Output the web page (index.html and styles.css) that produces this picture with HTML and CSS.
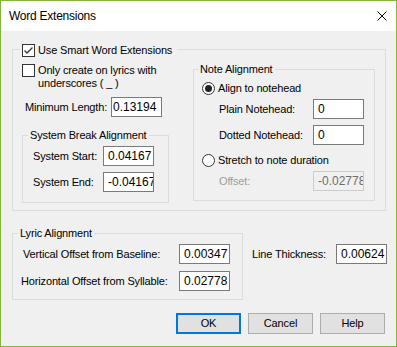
FILE: index.html
```html
<!DOCTYPE html>
<html>
<head>
<meta charset="utf-8">
<link rel="stylesheet" href="styles.css">
</head>
<body>
<div class="window">
  <div class="titlebar">
    <span class="title">Word Extensions</span>
    <svg class="close" viewBox="0 0 10 10" width="10" height="10"><path d="M0.5 0.5 L9.5 9.5 M9.5 0.5 L0.5 9.5" stroke="#000" stroke-width="1" fill="none"/></svg>
  </div>
  <div class="content">
    <div class="group outer">
      <div class="legend legend-outer">
        <span class="cb"><svg viewBox="0 0 11 11" width="11" height="11"><path d="M1.5 5.5 L4 8 L9.5 2.5" stroke="#333" stroke-width="1.3" fill="none"/></svg></span>
        <span class="cb-text">Use Smart Word Extensions</span>
      </div>
      <div class="outer-cols">
        <div class="left-col">
          <div class="opt-row">
            <span class="cb"></span>
            <span class="wrap-text">Only create on lyrics with<br>underscores ( _ )</span>
          </div>
          <div class="row min-row">
            <span class="lbl lbl-min">Minimum Length:</span>
            <span class="edit edit-min">0.13194</span>
          </div>
          <div class="group sba">
            <span class="legend legend-sba">System Break Alignment</span>
            <div class="row sba-row first">
              <span class="lbl lbl-sba">System Start:</span>
              <span class="edit">0.04167</span>
            </div>
            <div class="row sba-row second">
              <span class="lbl lbl-sba">System End:</span>
              <span class="edit">-0.04167</span>
            </div>
          </div>
        </div>
        <div class="group note">
          <span class="legend legend-note">Note Alignment</span>
          <div class="radio-row r1">
            <span class="rb on"></span>
            <span>Align to notehead</span>
          </div>
          <div class="row note-row plain">
            <span class="lbl lbl-note">Plain Notehead:</span>
            <span class="edit">0</span>
          </div>
          <div class="row note-row dotted">
            <span class="lbl lbl-note">Dotted Notehead:</span>
            <span class="edit">0</span>
          </div>
          <div class="radio-row r2">
            <span class="rb"></span>
            <span>Stretch to note duration</span>
          </div>
          <div class="row note-row offset">
            <span class="lbl lbl-note disabled">Offset:</span>
            <span class="edit edit-disabled">-0.02778</span>
          </div>
        </div>
      </div>
    </div>
    <div class="lower">
      <div class="group lyric">
        <span class="legend legend-lyric">Lyric Alignment</span>
        <div class="row ly-row v">
          <span class="lbl lbl-v">Vertical Offset from Baseline:</span>
          <span class="edit">0.00347</span>
        </div>
        <div class="row ly-row h">
          <span class="lbl lbl-h">Horizontal Offset from Syllable:</span>
          <span class="edit">0.02778</span>
        </div>
      </div>
      <div class="row thick-row">
        <span class="lbl lbl-thick">Line Thickness:</span>
        <span class="edit">0.00624</span>
      </div>
    </div>
    <div class="buttons">
      <span class="btn btn-default">OK</span>
      <span class="btn">Cancel</span>
      <span class="btn">Help</span>
    </div>
  </div>
</div>
</body>
</html>
```
FILE: styles.css
```css
* { box-sizing: border-box; }
html, body { margin: 0; padding: 0; }
body {
  width: 397px;
  height: 347px;
  overflow: hidden;
  font-family: "Liberation Sans", Arial, sans-serif;
  font-size: 11px;
  letter-spacing: -0.15px;
  line-height: 13px;
  color: #000;
  background: #f0f0f0;
}
.window {
  width: 397px;
  height: 347px;
  border: 1px solid #83b53b;
  background: #f0f0f0;
  display: flex;
  flex-direction: column;
}
.titlebar {
  flex: none;
  height: 30px;
  background: #fff;
  display: flex;
  align-items: center;
  justify-content: space-between;
  padding: 0 9px 0 8px;
}
.title { font-size: 12px; letter-spacing: -0.25px; line-height: 30px; }
.close { display: block; }
.content { flex: 1; display: flex; flex-direction: column; }

.group { border: 1px solid #dcdcdc; position: relative; }
.legend {
  position: absolute;
  background: #f0f0f0;
  padding: 0 2px;
  line-height: 16px;
  white-space: nowrap;
}
.outer { margin: 18px 0 0 11px; width: 374px; height: 162px; }
.legend-outer { top: -8px; left: 7px; display: flex; align-items: center; padding: 0 5px 0 2px; }
.cb {
  width: 13px;
  height: 13px;
  border: 1px solid #333;
  background: #fff;
  flex: none;
  display: flex;
  align-items: center;
  justify-content: center;
}
.cb svg { display: block; }
.cb-text { margin-left: 3px; }

.outer-cols { display: flex; align-items: flex-start; }
.left-col { width: 147px; margin-left: 9px; display: flex; flex-direction: column; }
.opt-row { margin-top: 14px; display: flex; align-items: flex-start; height: 26px; }
.wrap-text { margin-left: 3px; line-height: 13px; margin-top: 0; }

.row { display: flex; align-items: center; height: 20px; }
.lbl { flex: none; white-space: nowrap; }
.edit {
  flex: none;
  width: 51px;
  height: 20px;
  border: 1px solid #7a7a7a;
  background: #fff;
  font-size: 12px;
  letter-spacing: 0;
  line-height: 18px;
  padding-left: 4px;
  overflow: hidden;
  white-space: nowrap;
}
.edit-min { padding-left: 1px; }
.min-row { margin-top: 7px; padding-left: 3px; }
.lbl-min { width: 86px; }

.sba { margin-top: 18px; width: 147px; height: 68px; }
.legend-sba { top: -9px; left: 5px; }
.sba-row { padding-left: 10px; }
.sba-row.first { margin-top: 10px; }
.sba-row.second { margin-top: 6px; }
.lbl-sba { width: 70px; }

.note { margin: 19px 0 0 24px; width: 182px; height: 132px; display: flex; flex-direction: column; }
.legend-note { top: -9px; left: 4px; }
.radio-row { display: flex; align-items: center; height: 16px; padding-left: 8px; }
.radio-row.r1 { margin-top: 10px; }
.radio-row.r2 { margin-top: 7px; }
.rb {
  width: 13px;
  height: 13px;
  border: 1px solid #333;
  border-radius: 50%;
  background: #fff;
  flex: none;
  margin-right: 3px;
  display: flex;
  align-items: center;
  justify-content: center;
}
.rb.on::after {
  content: "";
  width: 7px;
  height: 7px;
  border-radius: 50%;
  background: #222;
}
.note-row { padding-left: 25px; }
.note-row.plain { margin-top: 3px; }
.note-row.dotted { margin-top: 6px; }
.note-row.offset { margin-top: 3px; }
.lbl-note { width: 94px; }
.disabled { color: #9d9d9d; }
.edit-disabled { border-color: #cccccc; background: #f0f0f0; color: #6d6d6d; }

.lower { display: flex; align-items: flex-start; margin: 22px 0 0 11px; }
.lyric { width: 231px; height: 67px; }
.legend-lyric { top: -9px; left: 5px; }
.ly-row.v { margin-top: 10px; padding-left: 10px; }
.ly-row.h { margin-top: 7px; padding-left: 8px; }
.lbl-v { width: 156px; }
.lbl-h { width: 158px; }
.thick-row { margin: 11px 0 0 9px; }
.lbl-thick { width: 84px; }

.buttons { display: flex; justify-content: flex-end; gap: 7px; margin-top: 13px; padding-right: 11px; }
.btn {
  width: 65px;
  height: 21px;
  border: 1px solid #adadad;
  background: #e1e1e1;
  display: flex;
  align-items: center;
  justify-content: center;
}
.btn-default { border: 2px solid #0078d7; }
```
